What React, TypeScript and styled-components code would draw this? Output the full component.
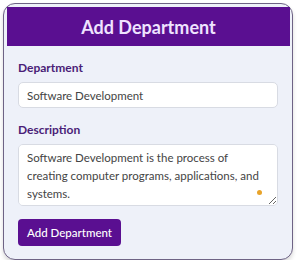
import React from 'react'
import styled, { createGlobalStyle } from 'styled-components'

const GlobalStyle = createGlobalStyle`
  body {
    margin: 0;
    background: #ffffff;
    font-family: Lato, 'Noto Sans', sans-serif;
  }
`

const Card = styled.div`
  box-sizing: border-box;
  width: 290px;
  margin: 3px 0 0 3px;
  padding: 3px 2px 13px 3px;
  background: #eef1f9;
  border: 1px solid #6e6385;
  border-radius: 12px;
  box-shadow: 0 3px 4px rgba(0, 0, 0, 0.15);
`

const Header = styled.div`
  background: #5a0f91;
  color: #efe3ff;
  height: 39px;
  display: flex;
  align-items: center;
  justify-content: center;
  font-size: 18px;
  font-weight: 700;
`

const Form = styled.form`
  display: flex;
  flex-direction: column;
  padding: 14px 12px 0 11px;
`

const Label = styled.label`
  color: #4a1d77;
  font-size: 12px;
  line-height: 15px;
  font-weight: 700;
  margin-bottom: 7px;
`

const Field = styled.div`
  position: relative;
  margin-bottom: 14px;
`

const Input = styled.input`
  box-sizing: border-box;
  display: block;
  width: 100%;
  height: 26px;
  padding: 0 8px;
  border: 1px solid #d8dbe3;
  border-radius: 5px;
  background: #ffffff;
  color: #444444;
  font-family: inherit;
  font-size: 11.5px;
`

const TextArea = styled.textarea`
  box-sizing: border-box;
  display: block;
  width: 100%;
  height: 62px;
  padding: 4px 8px;
  border: 1px solid #d8dbe3;
  border-radius: 5px;
  background: #ffffff;
  color: #444444;
  font-family: inherit;
  font-size: 11.5px;
  line-height: 18px;
  resize: vertical;
`

const Dot = styled.span`
  position: absolute;
  right: 16px;
  bottom: 11px;
  width: 5px;
  height: 5px;
  border-radius: 50%;
  background: #e8a32a;
`

const Button = styled.button`
  align-self: flex-start;
  margin-top: -1px;
  height: 27px;
  padding: 0 9px;
  border: none;
  border-radius: 4px;
  background: #5a0f91;
  color: #ffffff;
  font-family: inherit;
  font-size: 11.5px;
  font-weight: 500;
`

export default function App() {
  return (
    <>
      <GlobalStyle />
      <Card>
        <Header>Add Department</Header>
        <Form>
          <Label>Department</Label>
          <Field>
            <Input defaultValue="Software Development" />
          </Field>
          <Label>Description</Label>
          <Field>
            <TextArea defaultValue="Software Development is the process of creating computer programs, applications, and systems." />
            <Dot />
          </Field>
          <Button type="button">Add Department</Button>
        </Form>
      </Card>
    </>
  )
}
